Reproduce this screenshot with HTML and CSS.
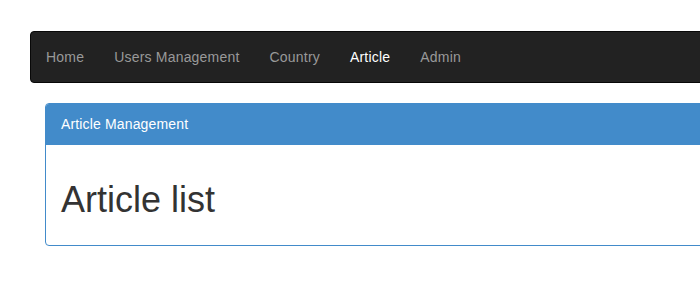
FILE: index.html
```html
<!DOCTYPE html>
<html lang="en">
<head>
    <meta charset="UTF-8" />
    <meta name="viewport" content="width=device-width, initial-scale=1.0" />
    <title>Article list</title>
    <link rel="stylesheet" href="styles.css">
</head>
<body>
    <div class="page">
        <nav class="navbar">
            <ul class="nav">
                <li><a href="#">Home</a></li>
                <li><a href="#">Users Management</a></li>
                <li><a href="#">Country</a></li>
                <li><a href="#" class="active">Article</a></li>
                <li><a href="#">Admin</a></li>
            </ul>
        </nav>
        <div class="container">
            <div class="panel">
                <div class="panel-heading">Article Management</div>
                <div class="panel-body">
                    <h1>Article list</h1>
                </div>
            </div>
        </div>
    </div>
</body>
</html>
```

FILE: styles.css
```css
html, body {
    margin: 0;
    padding: 0;
    overflow: hidden;
}
body {
    font-family: "Liberation Sans", Arial, sans-serif;
    font-size: 14px;
    line-height: 1.428571;
    color: #333;
    background: #fff;
}
.page {
    width: 800px;
    padding: 31px 0 0 30px;
}
.navbar {
    min-height: 50px;
    background: #222;
    border: 1px solid #080808;
    border-radius: 4px;
    margin-bottom: 20px;
}
.nav {
    list-style: none;
    margin: 0;
    padding: 0;
    display: flex;
}
.nav a {
    display: block;
    padding: 15px;
    line-height: 20px;
    color: #999;
    text-decoration: none;
    letter-spacing: 0.2px;
}
.nav a.active {
    color: #fff;
}
.container {
    padding: 0 15px;
}
.panel {
    border: 1px solid #428bca;
    border-radius: 4px;
    background: #fff;
}
.panel-heading {
    padding: 10px 15px;
    line-height: 20px;
    color: #fff;
    background: #428bca;
    border-bottom: 1px solid #428bca;
    border-radius: 3px 3px 0 0;
    letter-spacing: 0.15px;
}
.panel-body {
    padding: 15px;
}
.panel-body h1 {
    margin: 20px 0 10px;
    font-size: 36px;
    font-weight: 500;
    line-height: 1.1;
}
```
